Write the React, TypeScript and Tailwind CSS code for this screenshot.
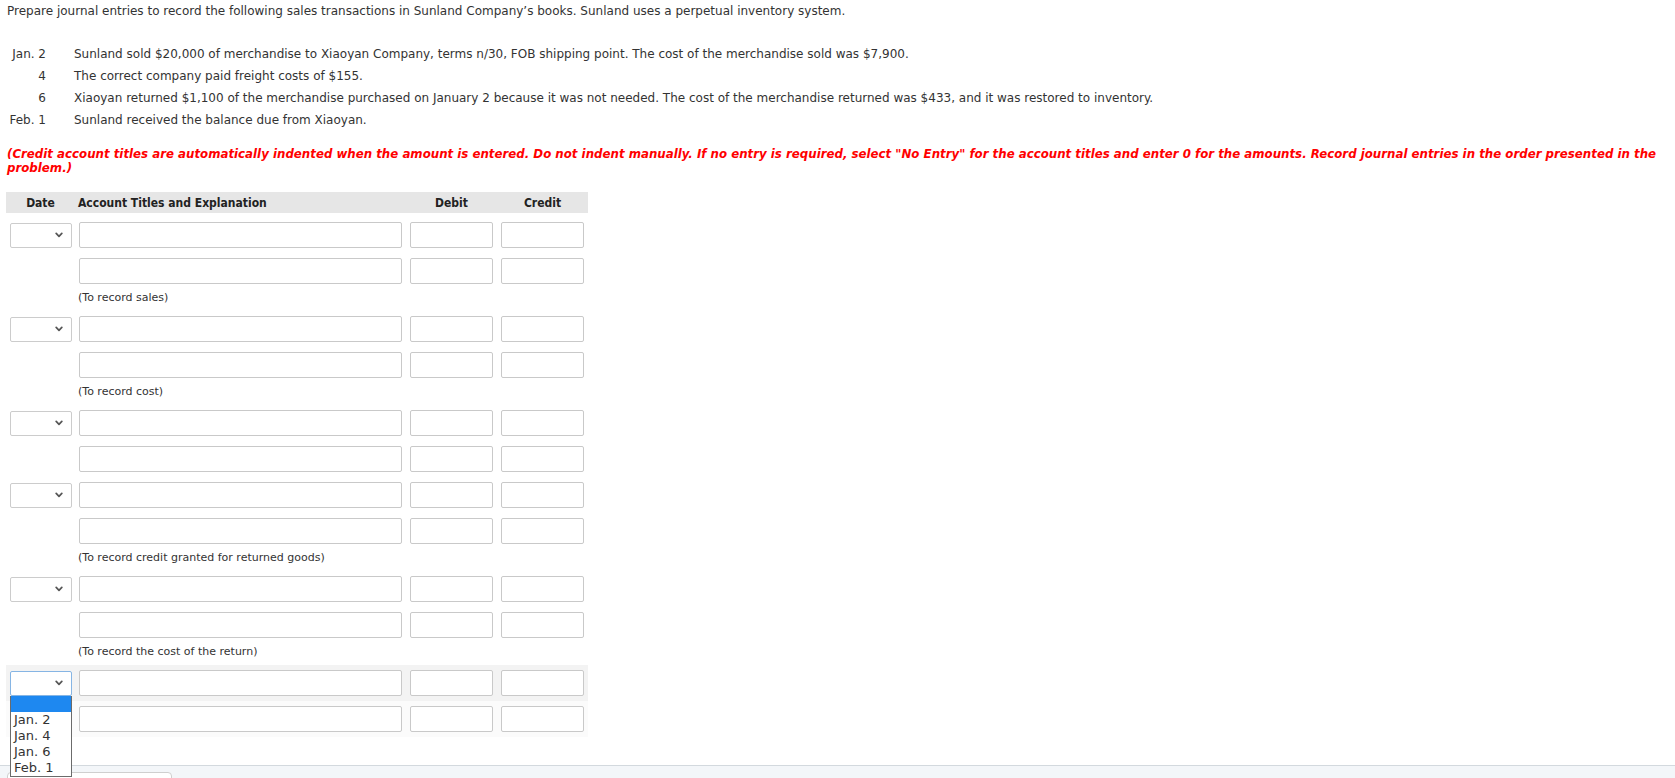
import React from "react";

const transactions: [string, string][] = [
  ["Jan. 2", "Sunland sold $20,000 of merchandise to Xiaoyan Company, terms n/30, FOB shipping point. The cost of the merchandise sold was $7,900."],
  ["4", "The correct company paid freight costs of $155."],
  ["6", "Xiaoyan returned $1,100 of the merchandise purchased on January 2 because it was not needed. The cost of the merchandise returned was $433, and it was restored to inventory."],
  ["Feb. 1", "Sunland received the balance due from Xiaoyan."],
];

type Entry = { expl: string | null; focused?: boolean };
const entries: Entry[] = [
  { expl: "(To record sales)" },
  { expl: "(To record cost)" },
  { expl: null },
  { expl: "(To record credit granted for returned goods)" },
  { expl: "(To record the cost of the return)" },
  { expl: null, focused: true },
];

function Chevron() {
  return (
    <svg width="8" height="6" viewBox="0 0 8 6">
      <path d="M1.2 1.4 L4 4.3 L6.8 1.4" stroke="#555" strokeWidth="1.7" fill="none" strokeLinecap="round" strokeLinejoin="round" />
    </svg>
  );
}

function DateSelect({ focused }: { focused?: boolean }) {
  return (
    <div
      className={`w-[62px] h-[25px] bg-white border rounded-[2px] flex items-center justify-end pr-[8px] ${
        focused ? "border-[#86b5e4]" : "border-[#cccccc]"
      }`}
    >
      <Chevron />
    </div>
  );
}

function Box({ w }: { w: string }) {
  return <div className={`${w} h-[26px] bg-white border border-[#c9c9c9] rounded-[2px]`} />;
}

function Row({ date, focused, bg }: { date?: boolean; focused?: boolean; bg?: string }) {
  return (
    <div className={`flex h-[36px] items-center ${bg ?? ""}`}>
      <div className="w-[69px] pl-[4px] relative">
        {date && <DateSelect focused={focused} />}
        {focused && (
          <div className="absolute left-[4px] top-[25px] w-[62px] bg-white border border-[#6b6b6b] border-t-0 z-10 text-[13px] leading-[16px] text-[#333] font-['DejaVu_Sans',Verdana,sans-serif]">
            <div className="h-[16px] bg-[#1e88f0]" />
            <div className="pl-[3px] h-[16px]">Jan. 2</div>
            <div className="pl-[3px] h-[16px]">Jan. 4</div>
            <div className="pl-[3px] h-[16px]">Jan. 6</div>
            <div className="pl-[3px] h-[16px]">Feb. 1</div>
          </div>
        )}
      </div>
      <div className="w-[331px] px-[4px]">
        <Box w="w-[323px]" />
      </div>
      <div className="w-[91px] px-[4px]">
        <Box w="w-[83px]" />
      </div>
      <div className="w-[91px] px-[4px]">
        <Box w="w-[83px]" />
      </div>
    </div>
  );
}

export default function App() {
  return (
    <div className="w-[1675px] h-[778px] overflow-hidden bg-white text-[#333] font-['DejaVu_Sans',Verdana,sans-serif] text-[12px] leading-[14px]">
      <div className="px-[7px] pt-[4px]">
        <div className="whitespace-nowrap">
          Prepare journal entries to record the following sales transactions in Sunland Company’s books. Sunland uses a perpetual inventory system.
        </div>

        <div className="mt-[25px] flex flex-col">
          {transactions.map(([d, t]) => (
            <div key={d} className="flex h-[22px] items-center whitespace-nowrap">
              <div className="w-[39px] text-right">{d}</div>
              <div className="ml-[28px]">{t}</div>
            </div>
          ))}
        </div>

        <div className="mt-[16px] text-[#ff0000] font-bold italic whitespace-nowrap text-[11.8px]">
          <div>
            (Credit account titles are automatically indented when the amount is entered. Do not indent manually. If no entry is required, select "No Entry" for the account titles and enter 0 for the amounts. Record journal entries in the order presented in the
          </div>
          <div>problem.)</div>
        </div>

        <div className="mt-[17px] -ml-[1px] w-[582px]">
          <div className="flex h-[21px] items-center bg-[#e6e6e6] font-bold text-[#222] font-['DejaVu_Sans_Condensed','DejaVu_Sans',sans-serif] font-stretch-condensed">
            <div className="w-[69px] text-center">Date</div>
            <div className="w-[331px] pl-[3px]">Account Titles and Explanation</div>
            <div className="w-[91px] text-center">Debit</div>
            <div className="w-[91px] text-center">Credit</div>
          </div>
          <div className="mt-[4px] flex flex-col text-[11px]">
            {entries.map((e, i) => (
              <div key={i} className="flex flex-col">
                <Row date focused={e.focused} bg={e.focused ? "bg-[#f3f3f3]" : undefined} />
                <Row bg={e.focused ? "bg-[#fbfbfb]" : undefined} />
                {e.expl && <div className="h-[22px] pt-[2px] pl-[72px]">{e.expl}</div>}
              </div>
            ))}
          </div>
        </div>
      </div>

      <div className="mt-[28px] border-t border-[#d3d9de] bg-[#f3f6f9] h-[40px] pt-[6px] pl-[7px]">
        <div className="w-[165px] h-[30px] bg-white border border-[#cfcfcf] rounded-tl-[4px] rounded-tr-[4px]" />
      </div>
    </div>
  );
}
